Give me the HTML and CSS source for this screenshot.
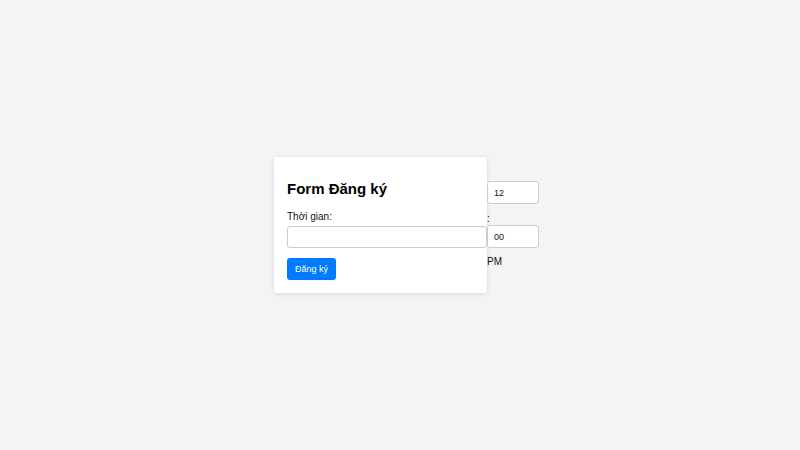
FILE: index.html
```html
<!DOCTYPE html>
<html lang="vi">
<head>
<meta charset="utf-8">
<title>Form Đăng ký</title>
<link rel="stylesheet" href="styles.css">
</head>
<body>
<div class="stage">
  <form class="card">
    <h2 class="title">Form Đăng ký</h2>
    <label class="label" for="time">Thời gian:</label>
    <input class="field" id="time" type="text">
    <button class="btn" type="button">Đăng ký</button>
  </form>
  <div class="picker">
    <input class="pick-input" type="text" value="12">
    <span class="sep">:</span>
    <input class="pick-input" type="text" value="00">
    <span class="ampm">PM</span>
  </div>
</div>
</body>
</html>
```
FILE: styles.css
```css
html, body {
  margin: 0;
  height: 100%;
}
body {
  background: #f4f4f4;
  font-family: "Liberation Sans", Arial, sans-serif;
  color: #111;
  display: flex;
  align-items: center;
  justify-content: center;
}
.stage {
  width: 252px;
  display: flex;
  align-items: flex-start;
}
.card {
  flex-shrink: 0;
  box-sizing: border-box;
  width: 213px;
  height: 136px;
  padding: 23px 0 13px 13px;
  background: #fff;
  border-radius: 3px;
  box-shadow: 0 1px 5px rgba(0, 0, 0, 0.12);
}
.title {
  margin: 0 0 14px;
  font-size: 15px;
  line-height: 17px;
  font-weight: bold;
  color: #000;
}
.label {
  display: block;
  font-size: 10px;
  line-height: 12px;
  margin-bottom: 3px;
  color: #111;
}
.field {
  display: block;
  box-sizing: border-box;
  width: 200px;
  height: 22px;
  margin: 0;
  border: 1px solid #ccc;
  border-radius: 3px;
  background: #fff;
}
.btn {
  display: block;
  margin-top: 10px;
  width: 49px;
  height: 22px;
  padding: 0;
  border: none;
  border-radius: 3px;
  background: #007bff;
  color: #fff;
  font-family: "Liberation Sans", Arial, sans-serif;
  font-size: 9px;
}
.picker {
  flex-shrink: 0;
  width: 52px;
  margin-top: 24px;
  display: flex;
  flex-direction: column;
  font-size: 10px;
  line-height: 12px;
  color: #111;
}
.pick-input {
  box-sizing: border-box;
  width: 52px;
  height: 23px;
  margin: 0;
  padding: 0 6px;
  border: 1px solid #ccc;
  border-radius: 3px;
  background: #fff;
  font-family: "Liberation Sans", Arial, sans-serif;
  font-size: 9px;
  color: #111;
}
.sep {
  margin: 9px 0 0;
}
.ampm {
  margin-top: 8px;
}
```
